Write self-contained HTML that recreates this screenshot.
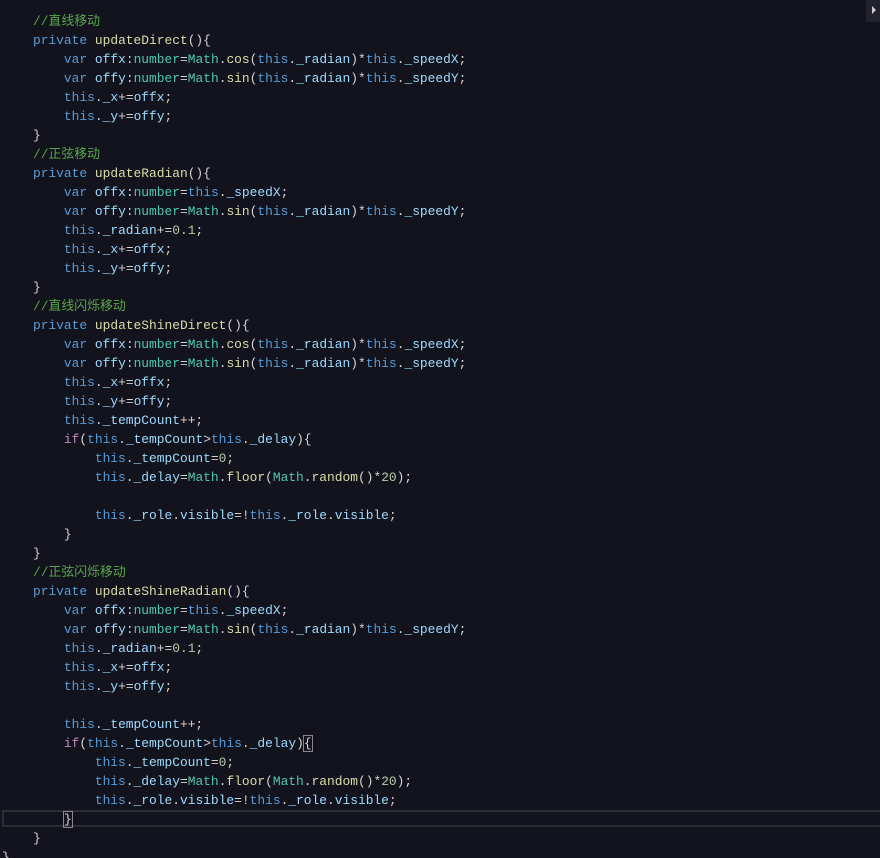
<!DOCTYPE html>
<html><head><meta charset="utf-8"><style>
html,body{margin:0;padding:0;background:#13131e;width:880px;height:858px;overflow:hidden;}
pre{margin:0;padding:12px 0 0 2px;font-family:"Liberation Mono","Noto Sans CJK SC",monospace;font-size:12.9px;line-height:19px;color:#d4d4d4;position:relative;z-index:1;}
.c{color:#57a64a}.k{color:#569cd6}.f{color:#dcdcaa}.p{color:#9cdcfe}.t{color:#4ec9b0}.n{color:#b5cea8}.i{color:#c586c0}
.cur{position:absolute;left:2px;top:810px;width:880px;height:17px;border:2px solid #2c2c33;box-sizing:border-box;}
.sb{position:absolute;right:0;top:0;width:14px;height:22px;background:#23232e;}
.sb::after{content:"";position:absolute;left:6px;top:6px;border-left:4px solid #ccc;border-top:4px solid transparent;border-bottom:4px solid transparent;}
.cb{outline:1px solid #888;}
</style></head><body>
<div class="cur"></div><div class="sb"></div>
<pre>    <span class="c">//直线移动</span>
    <span class="k">private</span> <span class="f">updateDirect</span>(){
        <span class="k">var</span> <span class="p">offx</span>:<span class="t">number</span>=<span class="t">Math</span>.<span class="f">cos</span>(<span class="k">this</span>.<span class="p">_radian</span>)*<span class="k">this</span>.<span class="p">_speedX</span>;
        <span class="k">var</span> <span class="p">offy</span>:<span class="t">number</span>=<span class="t">Math</span>.<span class="f">sin</span>(<span class="k">this</span>.<span class="p">_radian</span>)*<span class="k">this</span>.<span class="p">_speedY</span>;
        <span class="k">this</span>.<span class="p">_x</span>+=<span class="p">offx</span>;
        <span class="k">this</span>.<span class="p">_y</span>+=<span class="p">offy</span>;
    }
    <span class="c">//正弦移动</span>
    <span class="k">private</span> <span class="f">updateRadian</span>(){
        <span class="k">var</span> <span class="p">offx</span>:<span class="t">number</span>=<span class="k">this</span>.<span class="p">_speedX</span>;
        <span class="k">var</span> <span class="p">offy</span>:<span class="t">number</span>=<span class="t">Math</span>.<span class="f">sin</span>(<span class="k">this</span>.<span class="p">_radian</span>)*<span class="k">this</span>.<span class="p">_speedY</span>;
        <span class="k">this</span>.<span class="p">_radian</span>+=<span class="n">0.1</span>;
        <span class="k">this</span>.<span class="p">_x</span>+=<span class="p">offx</span>;
        <span class="k">this</span>.<span class="p">_y</span>+=<span class="p">offy</span>;
    }
    <span class="c">//直线闪烁移动</span>
    <span class="k">private</span> <span class="f">updateShineDirect</span>(){
        <span class="k">var</span> <span class="p">offx</span>:<span class="t">number</span>=<span class="t">Math</span>.<span class="f">cos</span>(<span class="k">this</span>.<span class="p">_radian</span>)*<span class="k">this</span>.<span class="p">_speedX</span>;
        <span class="k">var</span> <span class="p">offy</span>:<span class="t">number</span>=<span class="t">Math</span>.<span class="f">sin</span>(<span class="k">this</span>.<span class="p">_radian</span>)*<span class="k">this</span>.<span class="p">_speedY</span>;
        <span class="k">this</span>.<span class="p">_x</span>+=<span class="p">offx</span>;
        <span class="k">this</span>.<span class="p">_y</span>+=<span class="p">offy</span>;
        <span class="k">this</span>.<span class="p">_tempCount</span>++;
        <span class="i">if</span>(<span class="k">this</span>.<span class="p">_tempCount</span>&gt;<span class="k">this</span>.<span class="p">_delay</span>){
            <span class="k">this</span>.<span class="p">_tempCount</span>=<span class="n">0</span>;
            <span class="k">this</span>.<span class="p">_delay</span>=<span class="t">Math</span>.<span class="f">floor</span>(<span class="t">Math</span>.<span class="f">random</span>()*<span class="n">20</span>);

            <span class="k">this</span>.<span class="p">_role</span>.<span class="p">visible</span>=!<span class="k">this</span>.<span class="p">_role</span>.<span class="p">visible</span>;
        }
    }
    <span class="c">//正弦闪烁移动</span>
    <span class="k">private</span> <span class="f">updateShineRadian</span>(){
        <span class="k">var</span> <span class="p">offx</span>:<span class="t">number</span>=<span class="k">this</span>.<span class="p">_speedX</span>;
        <span class="k">var</span> <span class="p">offy</span>:<span class="t">number</span>=<span class="t">Math</span>.<span class="f">sin</span>(<span class="k">this</span>.<span class="p">_radian</span>)*<span class="k">this</span>.<span class="p">_speedY</span>;
        <span class="k">this</span>.<span class="p">_radian</span>+=<span class="n">0.1</span>;
        <span class="k">this</span>.<span class="p">_x</span>+=<span class="p">offx</span>;
        <span class="k">this</span>.<span class="p">_y</span>+=<span class="p">offy</span>;

        <span class="k">this</span>.<span class="p">_tempCount</span>++;
        <span class="i">if</span>(<span class="k">this</span>.<span class="p">_tempCount</span>&gt;<span class="k">this</span>.<span class="p">_delay</span>)<span class="cb">{</span>
            <span class="k">this</span>.<span class="p">_tempCount</span>=<span class="n">0</span>;
            <span class="k">this</span>.<span class="p">_delay</span>=<span class="t">Math</span>.<span class="f">floor</span>(<span class="t">Math</span>.<span class="f">random</span>()*<span class="n">20</span>);
            <span class="k">this</span>.<span class="p">_role</span>.<span class="p">visible</span>=!<span class="k">this</span>.<span class="p">_role</span>.<span class="p">visible</span>;
        <span class="cb">}</span>
    }
}</pre>
</body></html>
